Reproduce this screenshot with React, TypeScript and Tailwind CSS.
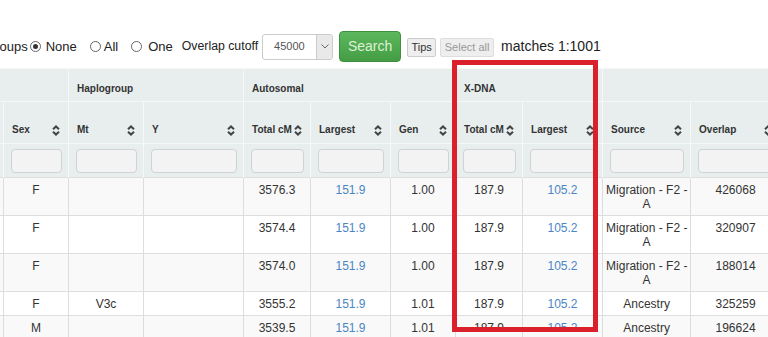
const font = { fontFamily: '"Liberation Sans", Arial, sans-serif' };

type Row = {
  sex: string;
  mt: string;
  total: string;
  largest: string;
  gen: string;
  xTotal: string;
  xLargest: string;
  source: string[];
  overlap: string;
};

const rows: Row[] = [
  { sex: "F", mt: "", total: "3576.3", largest: "151.9", gen: "1.00", xTotal: "187.9", xLargest: "105.2", source: ["Migration - F2 -", "A"], overlap: "426068" },
  { sex: "F", mt: "", total: "3574.4", largest: "151.9", gen: "1.00", xTotal: "187.9", xLargest: "105.2", source: ["Migration - F2 -", "A"], overlap: "320907" },
  { sex: "F", mt: "", total: "3574.0", largest: "151.9", gen: "1.00", xTotal: "187.9", xLargest: "105.2", source: ["Migration - F2 -", "A"], overlap: "188014" },
  { sex: "F", mt: "V3c", total: "3555.2", largest: "151.9", gen: "1.01", xTotal: "187.9", xLargest: "105.2", source: ["Ancestry"], overlap: "325259" },
  { sex: "M", mt: "", total: "3539.5", largest: "151.9", gen: "1.01", xTotal: "187.9", xLargest: "105.2", source: ["Ancestry"], overlap: "196624" },
];

const widths = [57, 65, 75, 100, 67, 80, 65, 67, 80, 88, 90];
const headers = ["", "Sex", "Mt", "Y", "Total cM", "Largest", "Gen", "Total cM", "Largest", "Source", "Overlap"];

function SortIcon() {
  return (
    <svg width="8" height="11" viewBox="0 0 8 11" className="shrink-0">
      <path d="M1 4.2 L4 1.4 L7 4.2" fill="none" stroke="#444" strokeWidth="2" />
      <path d="M1 6.8 L4 9.6 L7 6.8" fill="none" stroke="#444" strokeWidth="2" />
    </svg>
  );
}

function Radio({ checked }: { checked?: boolean }) {
  return (
    <span className="flex h-[11px] w-[11px] items-center justify-center rounded-full border border-[#666] bg-white">
      {checked && <span className="h-[5px] w-[5px] rounded-full bg-[#333]" />}
    </span>
  );
}

function Toolbar() {
  return (
    <div className="flex h-[31px] items-center whitespace-nowrap text-[13px] text-[#222]">
      <span className="-ml-[15px]">Groups</span>
      <span className="ml-[2px]"><Radio checked /></span>
      <span className="ml-[5px]">None</span>
      <span className="ml-[13px]"><Radio /></span>
      <span className="ml-[3px]">All</span>
      <span className="ml-[13px]"><Radio /></span>
      <span className="ml-[6px]">One</span>
      <span className="ml-[9px] text-[12.3px]">Overlap cutoff</span>
      <div className="ml-[4px] flex h-[26px] w-[71px] overflow-hidden rounded-[3px] border border-[#ccc] bg-white">
        <span className="flex flex-1 items-center pl-[11px] text-[11px] text-[#555]">45000</span>
        <span className="flex w-[16px] items-center justify-center border-l border-[#ccc] bg-[#e9e9e9]">
          <svg width="8" height="5" viewBox="0 0 8 5">
            <path d="M0.5 0.5 L4 4 L7.5 0.5" fill="none" stroke="#666" strokeWidth="1" />
          </svg>
        </span>
      </div>
      <button className="ml-[6px] flex h-[31px] w-[62px] items-center justify-center rounded-[4px] border border-[#3e8f3e] bg-gradient-to-b from-[#5cb85c] to-[#449d44] text-[14px] text-[#dff0d8]">
        Search
      </button>
      <button className="ml-[6px] mt-[2px] flex h-[19px] w-[29px] items-center justify-center rounded-[2px] border border-[#ccc] bg-[#eee] text-[11px] text-[#333]">
        Tips
      </button>
      <button className="ml-[4px] mt-[2px] flex h-[19px] w-[54px] items-center justify-center rounded-[2px] border border-[#ddd] bg-[#eee] text-[11px] text-[#999]">
        Select all
      </button>
      <span className="ml-[7px] text-[14px] text-[#222]">matches 1:1001</span>
    </div>
  );
}

export default function App() {
  return (
    <div className="relative h-[337px] w-[768px] overflow-hidden bg-white" style={font}>
      <div className="pt-[31px]">
        <Toolbar />
      </div>
      <div className="mt-[6px]">
        <table className="-ml-[54px] table-fixed border-collapse text-[#333]" style={{ width: widths.reduce((a, b) => a + b, 0) }}>
          <colgroup>
            {widths.map((w, i) => (
              <col key={i} style={{ width: w }} />
            ))}
          </colgroup>
          <thead>
            <tr className="h-[33px] bg-[#e8eeee] text-[10px] font-bold">
              <th colSpan={2} className="border border-[#f6f8f8]" />
              <th colSpan={2} className="border border-[#f6f8f8] pb-[5px] pl-[8px] text-left align-bottom leading-[14px]">Haplogroup</th>
              <th colSpan={3} className="border border-[#f6f8f8] pb-[5px] pl-[8px] text-left align-bottom leading-[14px]">Autosomal</th>
              <th colSpan={2} className="border border-[#f6f8f8] pb-[5px] pl-[8px] text-left align-bottom leading-[14px]">X-DNA</th>
              <th colSpan={2} className="border border-[#f6f8f8]" />
            </tr>
            <tr className="h-[42px] bg-[#e8eeee] text-[10px] font-bold">
              {headers.map((h, i) => (
                <th key={i} className="border border-[#f6f8f8] pb-[6px] pl-[8px] pr-[8px] text-left align-bottom leading-[14px]">
                  <div className="flex items-center justify-between gap-[2px] whitespace-nowrap">
                    <span>{h}</span>
                    <SortIcon />
                  </div>
                </th>
              ))}
            </tr>
            <tr className="h-[33px] bg-[#e8eeee]">
              {headers.map((_, i) => (
                <td key={i} className="border-x border-[#f6f8f8] pb-[4px] pl-[7px] pr-[6px] pt-[5px]">
                  <div className="h-[24px] w-full rounded-[4px] border border-[#cfd3d3] bg-[#f3f3f3]" />
                </td>
              ))}
            </tr>
          </thead>
          <tbody className="text-[12px] leading-[14px]">
            {rows.map((r, i) => {
              const cells = ["", r.sex, r.mt, "", r.total, r.largest, r.gen, r.xTotal, r.xLargest, "", r.overlap];
              return (
                <tr key={i} className={i % 2 === 0 ? "bg-[#f9f9f9]" : "bg-white"}>
                  {cells.map((c, j) => (
                    <td
                      key={j}
                      className={`border border-[#dddddd] px-[3px] pb-[4px] pt-[5px] text-center align-top ${
                        j === 5 || j === 8 ? "text-[#4a86c5]" : ""
                      }`}
                    >
                      {j === 9 ? (
                        <span className="whitespace-nowrap">
                          {r.source.map((s, k) => (
                            <span key={k} className="block">{s}</span>
                          ))}
                        </span>
                      ) : (
                        c
                      )}
                    </td>
                  ))}
                </tr>
              );
            })}
          </tbody>
        </table>
      </div>
      <div className="pointer-events-none absolute left-[452px] top-[60px] h-[272px] w-[146px] border-[5px] border-[#d9202b]" />
    </div>
  );
}
